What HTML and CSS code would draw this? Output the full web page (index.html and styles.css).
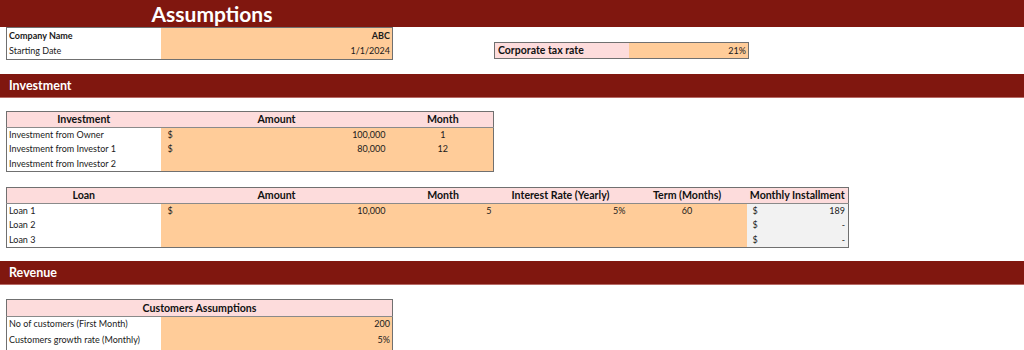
FILE: index.html
```html
<!DOCTYPE html>
<html lang="en">
<head>
<meta charset="utf-8">
<title>Assumptions</title>
<link rel="stylesheet" href="styles.css">
</head>
<body>
<div class="title-band"><span class="title">Assumptions</span></div>

<div class="top-row">
  <table class="sheet t-company">
    <colgroup><col class="ca"><col class="cb"></colgroup>
    <tr class="r16"><td class="lbl b">Company Name</td><td class="in num b">ABC</td></tr>
    <tr class="r16"><td class="lbl">Starting Date</td><td class="in num">1/1/2024</td></tr>
  </table>
  <div class="tax">
    <div class="tax-lbl">Corporate tax rate</div>
    <div class="tax-val">21%</div>
  </div>
</div>

<div class="band">Investment</div>

<table class="sheet t-invest">
  <colgroup><col class="ca"><col class="cb"><col class="cc"></colgroup>
  <tr class="hdr r15"><th>Investment</th><th>Amount</th><th>Month</th></tr>
  <tr class="r15"><td class="lbl">Investment from Owner</td><td class="in"><div class="acct"><span>$</span><span>100,000</span></div></td><td class="in ctr">1</td></tr>
  <tr class="r15"><td class="lbl">Investment from Investor 1</td><td class="in"><div class="acct"><span>$</span><span>80,000</span></div></td><td class="in ctr">12</td></tr>
  <tr class="r15"><td class="lbl">Investment from Investor 2</td><td class="in"></td><td class="in"></td></tr>
</table>

<table class="sheet t-loan">
  <colgroup><col class="ca"><col class="cb"><col class="cc"><col class="cd"><col class="ce"><col class="cf"></colgroup>
  <tr class="hdr r15"><th>Loan</th><th>Amount</th><th>Month</th><th>Interest Rate (Yearly)</th><th>Term (Months)</th><th>Monthly Installment</th></tr>
  <tr class="r15"><td class="lbl">Loan 1</td><td class="in"><div class="acct"><span>$</span><span>10,000</span></div></td><td class="in num">5</td><td class="in num">5%</td><td class="in ctr">60</td><td class="calc"><div class="acct"><span>$</span><span>189</span></div></td></tr>
  <tr class="r15"><td class="lbl">Loan 2</td><td class="in"></td><td class="in"></td><td class="in"></td><td class="in"></td><td class="calc"><div class="acct"><span>$</span><span>-</span></div></td></tr>
  <tr class="r15"><td class="lbl">Loan 3</td><td class="in"></td><td class="in"></td><td class="in"></td><td class="in"></td><td class="calc"><div class="acct"><span>$</span><span>-</span></div></td></tr>
</table>

<div class="band">Revenue</div>

<table class="sheet t-cust">
  <colgroup><col class="ca"><col class="cb"></colgroup>
  <tr class="hdr r16"><th colspan="2">Customers Assumptions</th></tr>
  <tr class="r16"><td class="lbl">No of customers (First Month)</td><td class="in num">200</td></tr>
  <tr class="r16"><td class="lbl">Customers growth rate (Monthly)</td><td class="in num">5%</td></tr>
  <tr class="r16"><td class="lbl"></td><td class="in"></td></tr>
</table>
</body>
</html>
```

FILE: styles.css
```css
html, body {
  margin: 0;
  padding: 0;
  background: #ffffff;
}
body {
  font-family: Lato, "Liberation Sans", Arial, sans-serif;
  font-size: 9px;
  color: #1a1a1a;
  overflow: hidden;
}

.title-band {
  height: 27px;
  background: #80170f;
}
.title {
  display: block;
  width: 424px;
  text-align: center;
  color: #ffffff;
  font-weight: 700;
  font-size: 21px;
  line-height: 27px;
}

.band {
  height: 23px;
  line-height: 23px;
  background: #80170f;
  color: #ffffff;
  font-weight: 700;
  font-size: 12.5px;
  padding-left: 9px;
  border-bottom: 1px solid #b76b66;
}

.top-row {
  display: flex;
  align-items: flex-end;
  margin-left: 6px;
  margin-bottom: 14px;
}

.sheet {
  border-collapse: collapse;
  table-layout: fixed;
  border: 1px solid #707070;
  margin-left: 6px;
}
.top-row .sheet { margin-left: 0; }

.ca { width: 154px; }
.cb { width: 232px; }
.cc { width: 101px; }
.cd { width: 134px; }
.ce { width: 119px; }
.cf { width: 102px; }

.t-company { width: 386px; }
.t-invest { width: 487px; margin-top: 13px; }
.t-loan { width: 842px; margin-top: 15px; margin-bottom: 13px; }
.t-cust { width: 386px; margin-top: 14px; }

.sheet td, .sheet th {
  padding: 0 2px;
  white-space: nowrap;
  overflow: hidden;
  line-height: 12px;
}
.r16 td, .r16 th { height: 15.5px; }
.r15 td, .r15 th { height: 14.5px; }

.hdr th {
  background: #fddcdc;
  font-weight: 700;
  font-size: 10.6px;
  text-align: center;
  border-bottom: 1px solid #8a8a8a;
  color: #111;
}

.lbl { background: #ffffff; text-align: left; }
.b { font-weight: 700; }
.in { background: #ffcc99; }
.calc { background: #f2f2f2; }
.num { text-align: right; }
.ctr { text-align: center; }

.sheet td.in .acct,
.sheet td.calc .acct {
  display: flex;
  justify-content: space-between;
  padding: 0 5px 0 5px;
}
.sheet td.calc .acct { padding: 0 1px 0 4px; }

.tax {
  display: flex;
  margin-left: 101px;
  border: 1px solid #707070;
  height: 15px;
  margin-bottom: 1px;
}
.tax-lbl {
  width: 131px;
  background: #fddcdc;
  font-weight: 700;
  font-size: 10.5px;
  line-height: 15px;
  padding-left: 3px;
  color: #111;
}
.tax-val {
  width: 117px;
  background: #ffcc99;
  text-align: right;
  line-height: 15px;
  padding-right: 2px;
}
```
